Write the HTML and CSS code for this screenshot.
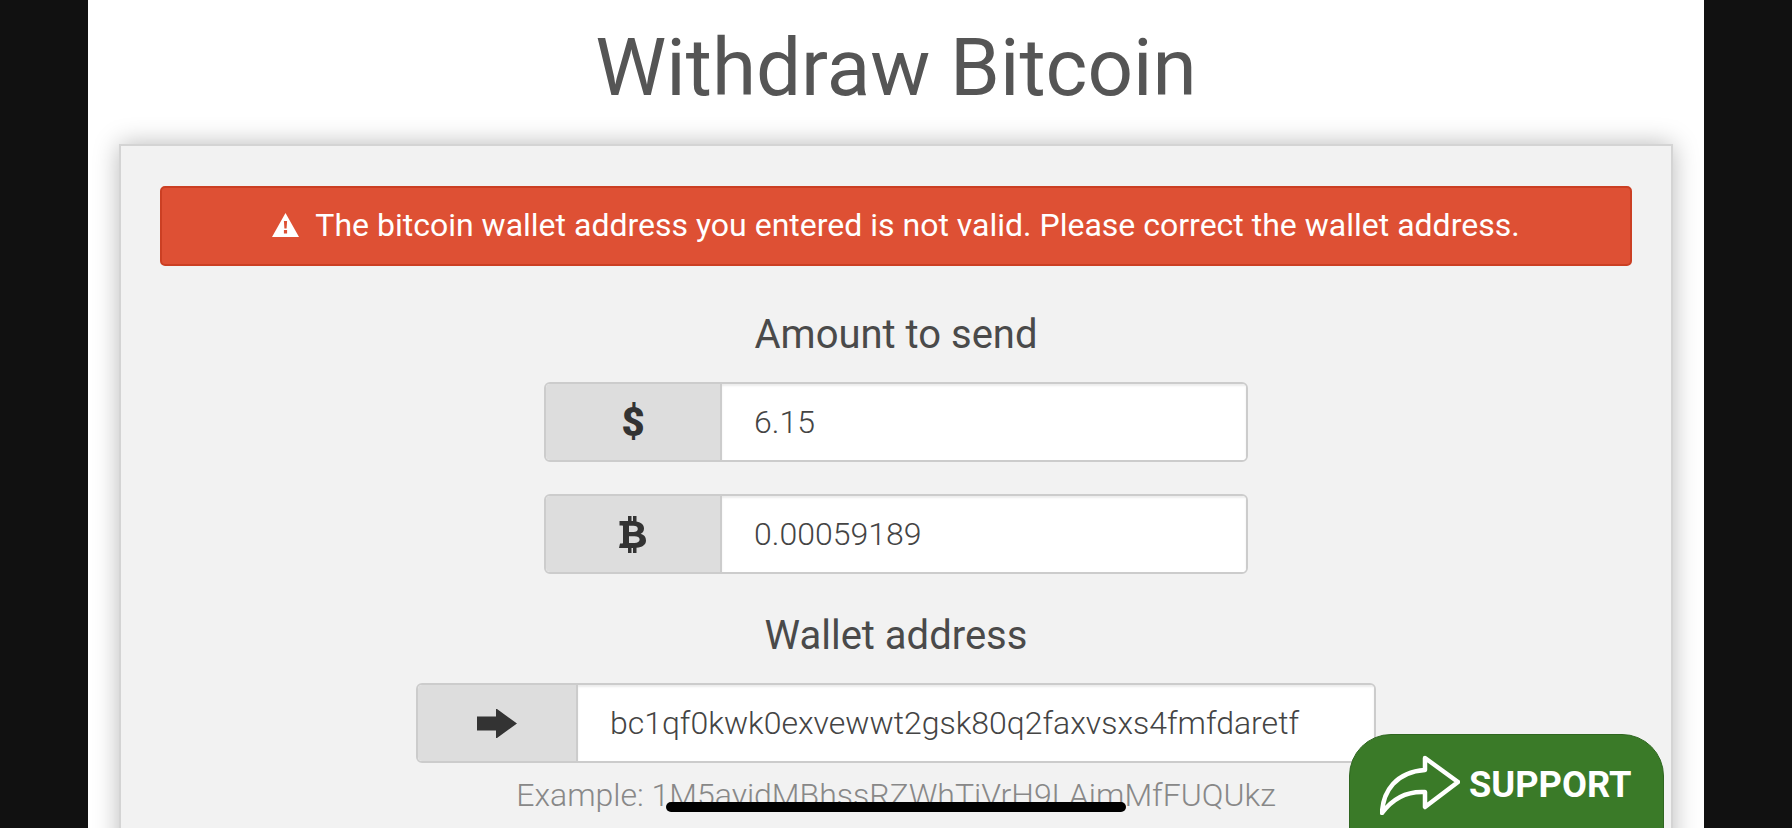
FILE: index.html
```html
<!DOCTYPE html>
<html lang="en">
<head>
    <meta charset="UTF-8">
    <meta name="viewport" content="width=device-width, initial-scale=1.0">
    <title>Withdraw Bitcoin</title>
    <link rel="stylesheet" href="styles.css">
</head>
<body>
    <div class="page">
        <h1 class="page-title">Withdraw Bitcoin</h1>

        <div class="card">
            <div class="alert">
                <svg class="alert-icon" viewBox="0 0 27 24"><path fill="#fff" fill-rule="evenodd" d="M13.5 0 L27 24 H0 Z M11.9 8 L12.4 15.5 H14.6 L15.1 8 Z M11.9 17 V20.6 H15.1 V17 Z"/></svg>
                <span>The bitcoin wallet address you entered is not valid. Please correct the wallet address.</span>
            </div>

            <div class="field-title">Amount to send</div>
            <div class="input-group">
                <div class="addon"><span class="addon-dollar">$</span></div>
                <input type="text" class="input-field" value="6.15">
            </div>
            <div class="input-group">
                <div class="addon">
                    <svg class="addon-btc" viewBox="0 0 28 37"><path fill="#333" fill-rule="evenodd" d="M9 0 H12.5 V5 H14 V0 H17.5 V5.4 C22.5 6.2 25 9 25 12.4 C25 15 23.8 16.8 21.6 17.8 C25 18.6 27 21 27 24.6 C27 28.9 23.3 31.4 17.5 31.8 V37 H14 V32 H12.5 V37 H9 V32 H0 L1 27.5 H3 C3.8 27.5 4 27.2 4 26.5 V10.5 C4 9.8 3.8 9.5 3 9.5 H0.5 V5 H9 Z M10 9.8 V15.9 H14.5 C17.1 15.9 18.8 15 18.8 12.9 C18.8 10.8 17.1 9.8 14.5 9.8 Z M10 20.2 V27 H15.5 C18.5 27 20.6 26 20.6 23.6 C20.6 21.2 18.5 20.2 15.5 20.2 Z"/></svg>
                </div>
                <input type="text" class="input-field" value="0.00059189">
            </div>

            <div class="field-title">Wallet address</div>
            <div class="input-group input-group-wide">
                <div class="addon">
                    <svg class="addon-arrow" viewBox="0 0 40 29"><path fill="#333" d="M0 7.5 H19 V0 H20 L40 14.5 L20 29 H19 V21.5 H0 Z"/></svg>
                </div>
                <input type="text" class="input-field" value="bc1qf0kwk0exvewwt2gsk80q2faxvsxs4fmfdaretf">
            </div>
            <div class="hint">Example: 1M5ayidMBhssRZWhTiVrH9LAimMfFUQUkz</div>
        </div>
    </div>

    <div class="support-button">
        <svg class="support-icon" viewBox="0 0 80 60"><path fill="none" stroke="#fff" stroke-width="4.5" stroke-linejoin="round" d="M2 58 C3 36 16 17 45 15 V3 L78 27 L45 52 V37 C28 36 13 43 2 58 Z"/></svg>
        <span class="support-label">SUPPORT</span>
    </div>
    <div class="home-bar"></div>
</body>
</html>
```
FILE: styles.css
```css
html, body {
    margin: 0;
    height: 100%;
    overflow: hidden;
}

body {
    font-family: Roboto, sans-serif;
    background-color: #111;
}

.page {
    margin: 0 88px;
    height: 100vh;
    padding: 0 31px;
    background-color: #fff;
    overflow: hidden;
}

.page-title {
    margin: 0;
    height: 144px;
    line-height: 136px;
    font-size: 80px;
    font-weight: 400;
    color: #555;
    text-align: center;
}

.card {
    padding: 40px 39px;
    background-color: #f2f2f2;
    border: 2px solid #d4d4d4;
    box-shadow: 0 0 24px rgba(0, 0, 0, 0.28);
    height: 900px;
    box-sizing: border-box;
}

.alert {
    display: flex;
    align-items: center;
    justify-content: center;
    gap: 16px;
    height: 80px;
    box-sizing: border-box;
    padding-bottom: 2px;
    margin-bottom: 39px;
    background-color: #de5034;
    border: 2px solid #cb3f23;
    border-radius: 5px;
    color: #fff;
    font-size: 32px;
    font-weight: 400;
}

.alert-icon {
    width: 27px;
    height: 24px;
}

.field-title {
    height: 54px;
    padding-top: 3px;
    margin-bottom: 20px;
    line-height: 54px;
    font-size: 40px;
    color: #4a4a4a;
    text-align: center;
}

.input-group {
    display: flex;
    width: 704px;
    height: 80px;
    box-sizing: border-box;
    margin: 0 auto 32px;
    background-color: #fff;
    border: 2px solid #ccc;
    border-radius: 6px;
    overflow: hidden;
}

.input-group-wide {
    width: 960px;
    margin-bottom: 10px;
}

.addon {
    display: flex;
    align-items: center;
    justify-content: center;
    flex: none;
    width: 174px;
    background-color: #ddd;
    border-right: 2px solid #ccc;
}

.input-group-wide .addon {
    width: 158px;
}

.addon-dollar {
    font-size: 40px;
    font-weight: 900;
    color: #333;
}

.addon-btc {
    width: 28px;
    height: 37px;
}

.addon-arrow {
    width: 40px;
    height: 29px;
}

.input-field {
    flex: 1;
    min-width: 0;
    padding: 0 32px;
    border: none;
    outline: none;
    background: #fff;
    font-family: Roboto, sans-serif;
    font-size: 32px;
    font-weight: 300;
    color: #444;
    box-shadow: inset 0 2px 2px rgba(0, 0, 0, 0.08);
}

.hint {
    font-size: 32px;
    font-weight: 300;
    line-height: 44px;
    color: #888;
    text-align: center;
}

.support-button {
    position: fixed;
    left: 1349px;
    top: 734px;
    width: 315px;
    height: 160px;
    box-sizing: border-box;
    display: flex;
    align-items: flex-start;
    gap: 9px;
    padding: 20px 30px 0 30px;
    background-color: #3a7a28;
    border: 1px solid #2f6620;
    border-radius: 42px;
    color: #fff;
    font-size: 36.25px;
    font-weight: 700;
}

.support-icon {
    width: 80px;
    height: 60px;
}

.support-label {
    margin-top: 8px;
}

.home-bar {
    position: fixed;
    left: 666px;
    top: 802px;
    width: 460px;
    height: 10px;
    background-color: #000;
    border-radius: 5px;
}
```
